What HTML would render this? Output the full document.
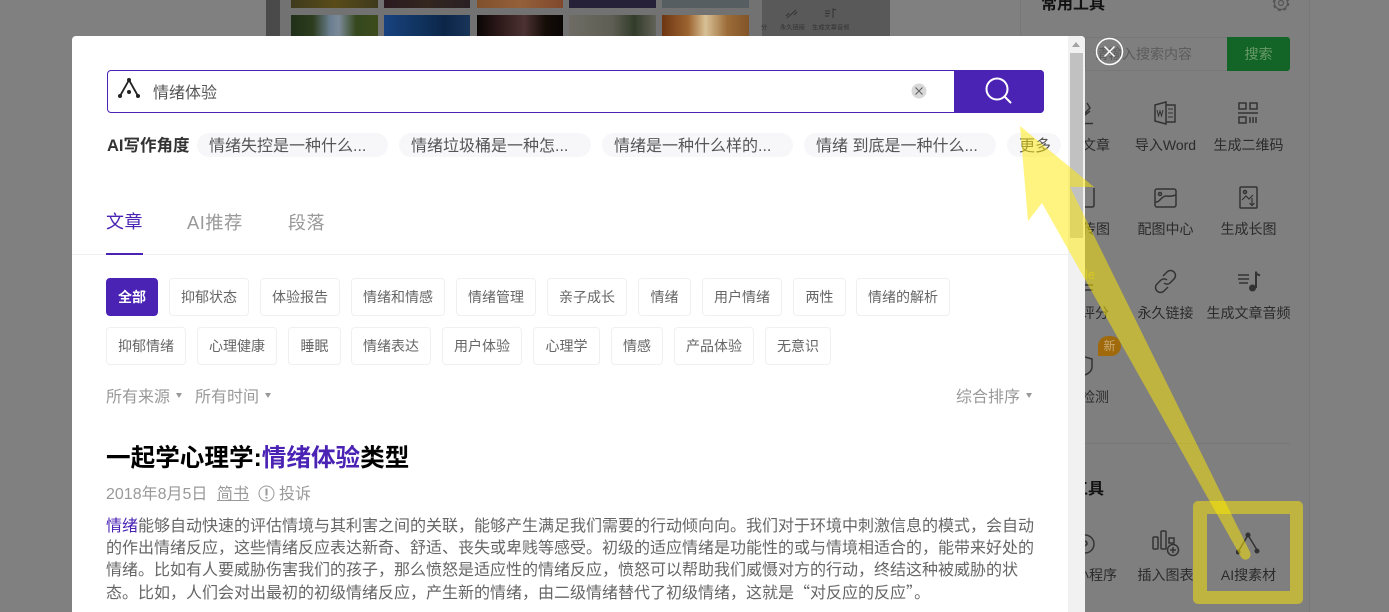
<!DOCTYPE html>
<html><head><meta charset="utf-8"><style>
*{box-sizing:border-box}
html,body{margin:0;padding:0;width:1389px;height:612px;overflow:hidden;background:#808080;font-family:"Liberation Sans","Noto Sans CJK SC",sans-serif}
#r{position:absolute;left:0;top:0;width:1389px;height:612px;overflow:hidden}
.a{position:absolute;white-space:nowrap}
.chip{position:absolute;height:38px;border:1px solid #f0f0f0;border-radius:4px;font-size:14px;line-height:36px;text-align:center;color:#666;background:#fff}
.pill{position:absolute;top:133px;height:24px;border-radius:12px;background:#f7f7fa;font-size:16px;line-height:27px;color:#555;padding-left:12px;white-space:nowrap}
.lab{position:absolute;font-size:14px;line-height:20px;color:#2b2b2b;text-align:center;white-space:nowrap;width:100px}
.im{position:absolute}
svg.i{position:absolute;fill:none;stroke:#333;stroke-width:1.5}
.q{font-family:"Noto Sans CJK SC",sans-serif;line-height:0}
</style></head><body><div id="r">
<!-- background page -->
<div class="a" style="left:266px;top:0;width:14px;height:36px;background:#4a4a4a"></div>
<div class="a" style="left:280px;top:0;width:482px;height:36px;background:#727272"></div>
<div class="im" style="left:291px;top:0;width:87px;height:8px;background:linear-gradient(90deg,#3e3a1c,#5a4c1a 50%,#3e3a1c)"></div>
<div class="im" style="left:384px;top:0;width:86px;height:8px;background:linear-gradient(90deg,#2a1a20,#33261f,#2a2024)"></div>
<div class="im" style="left:477px;top:0;width:86px;height:8px;background:linear-gradient(90deg,#80502c,#94603a,#80482c)"></div>
<div class="im" style="left:569px;top:0;width:87px;height:8px;background:#262038"></div>
<div class="im" style="left:662px;top:0;width:87px;height:8px;background:#565e62"></div>
<div class="im" style="left:291px;top:15px;width:87px;height:21px;background:linear-gradient(90deg,#20301a,#2c3c1c 25%,#6a7e90 45%,#7c8a98 55%,#34481e 75%,#3e4c1c)"></div>
<div class="im" style="left:384px;top:15px;width:86px;height:21px;background:linear-gradient(90deg,#184280,#103460 40%,#0c2648 70%,#183458)"></div>
<div class="im" style="left:477px;top:15px;width:86px;height:21px;background:linear-gradient(90deg,#0a0606,#2c1818 25%,#4c3232 55%,#140c06 80%,#0a0606)"></div>
<div class="im" style="left:569px;top:15px;width:87px;height:21px;background:linear-gradient(90deg,#6e6c64,#5e5e54 50%,#323c2a 75%,#626258)"></div>
<div class="im" style="left:662px;top:15px;width:87px;height:21px;background:linear-gradient(90deg,#6e3612,#9c6430 30%,#d8c096 50%,#9c6c38 75%,#825428)"></div>
<div class="a" style="left:762px;top:0;width:128px;height:36px;background:#595959"></div>
<svg class="a" style="left:785px;top:8px" width="14" height="12" viewBox="0 0 14 12" fill="none" stroke="#333" stroke-width="1"><path d="M2 10l9-8M1 8l3-3M9 7l3-3"/></svg>
<svg class="a" style="left:825px;top:8px" width="12" height="12" viewBox="0 0 12 12" fill="none" stroke="#333" stroke-width="1"><path d="M0 3h5M0 5.500h5M0 8h4M8 10V1l3 1"/></svg>
<div class="a" style="left:780px;top:24px;font-size:8px;color:#333;line-height:10px;transform:scale(.78);transform-origin:0 0">永久链接</div>
<div class="a" style="left:812px;top:24px;font-size:8px;color:#333;line-height:10px;transform:scale(.78);transform-origin:0 0">生成文章音频</div>
<div class="a" style="left:761px;top:24px;font-size:8px;color:#333;line-height:10px;transform:scale(.78);transform-origin:0 0">分</div>

<!-- sidebar -->
<div class="a" style="left:1020px;top:0;width:290px;height:612px;background:#7f7f7f;border:1px solid #787878;border-width:0 1px"></div>
<div class="a" style="left:1041px;top:-5px;font-size:16px;font-weight:bold;line-height:20px;color:#111">常用工具</div>
<svg class="i" style="left:1272px;top:-6px" width="18" height="18" viewBox="0 0 18 18"><circle stroke="#555" cx="9" cy="9" r="6.500" stroke-width="1.200"/><circle stroke="#555" cx="9" cy="9" r="7.500" stroke-width="1.500" stroke-dasharray="3 3"/><circle stroke="#555" cx="9" cy="9" r="2.500" stroke-width="1.200"/></svg>
<div class="a" style="left:1085px;top:37px;width:142px;height:34px;border:1px solid #777;border-right:0"></div>
<div class="a" style="left:1094px;top:44px;font-size:14px;line-height:20px;color:#5c5c5c">请输入搜索内容</div>
<div class="a" style="left:1227px;top:37px;width:63px;height:34px;background:#126526;border-radius:0 3px 3px 0;font-size:14px;line-height:34px;text-align:center;color:#6a9a6a">搜索</div>

<!-- icons -->
<svg class="i" style="left:1085px;top:101px" width="10" height="24" viewBox="0 0 10 24"><path d="M0 22.500h8M0 14l5-4M2 2l3 5-5 5"/></svg>
<svg class="i" style="left:1154px;top:101px" width="22" height="24" viewBox="0 0 22 24" stroke-width="1.300"><path d="M1 4l11-3v22L1 20z M12 4h9v17h-9"/><path d="M14 8h5M14 12h5M14 16h5M3 9l1.500 6 1.500-5 1.500 5L9 9" stroke-width="1"/></svg>
<svg class="i" style="left:1238px;top:102px" width="20" height="22" viewBox="0 0 20 22" stroke-width="1.500"><rect x="1" y="1" width="7" height="6"/><rect x="12" y="1" width="7" height="6"/><path d="M0 11h20M1 15h7v6H1zM12 15v6M15 15v6M18 15v6"/></svg>
<svg class="i" style="left:1085px;top:186px" width="10" height="22" viewBox="0 0 10 22"><path d="M0 21h7q2 0 2-2V2"/></svg>
<svg class="i" style="left:1154px;top:188px" width="23" height="20" viewBox="0 0 23 20" stroke-width="1.400"><rect x="1" y="1" width="21" height="18" rx="2"/><path d="M1 14c5 1 6-6 11-6 3 0 4 1 10-1"/><circle cx="6" cy="6" r="1.500"/></svg>
<svg class="i" style="left:1239px;top:186px" width="19" height="23" viewBox="0 0 19 23" stroke-width="1.400"><rect x="1" y="1" width="17" height="21" rx="1"/><circle cx="6" cy="6" r="1.500"/><path d="M3 14l4-4 3 3 4-4M13 12v7M10.500 17l2.500 2.500 2.500-2.500" stroke-width="1.200"/></svg>
<div class="a" style="left:1085px;top:268px;font-size:13px;color:#b0a94a;line-height:14px">le</div>
<svg class="i" style="left:1085px;top:284px" width="10" height="8" viewBox="0 0 10 8"><path d="M0 1h8M0 6h8"/></svg>
<svg class="i" style="left:1153px;top:269px" width="25" height="25" viewBox="0 0 25 25" stroke-width="1.500"><path d="M10 7l4-4a4.500 4.500 0 0 1 7 7l-4 4a4.500 4.500 0 0 1-6 0M15 18l-4 4a4.500 4.500 0 0 1-7-7l4-4a4.500 4.500 0 0 1 6 0"/></svg>
<svg class="i" style="left:1237px;top:270px" width="24" height="22" viewBox="0 0 24 22" stroke-width="1.500"><path d="M1 5h11M1 9h11M2 13h9"/><path d="M19 18V1.500c0 3 2 3 4 4" stroke-width="2"/><circle cx="15.500" cy="18" r="3.500" fill="#333" stroke="none"/></svg>
<svg class="i" style="left:1085px;top:356px" width="8" height="20" viewBox="0 0 8 20"><path d="M0 1l7 2v8q0 5-7 8"/></svg>
<div class="a" style="left:1098px;top:336px;width:23px;height:20px;background:#a06a0c;border-radius:10px 10px 10px 0;font-size:12px;line-height:20px;text-align:center;color:#c8aa70">新</div>
<svg class="i" style="left:1085px;top:532px" width="10" height="24" viewBox="0 0 10 24"><path d="M0 3a9 9 0 0 1 0 18"/><path d="M0 9a3 3 0 0 1 2 3l-2 2"/></svg>
<svg class="i" style="left:1151px;top:530px" width="29" height="27" viewBox="0 0 29 27" stroke-width="1.300"><rect x="2" y="7" width="5" height="12" rx="1"/><rect x="10" y="1" width="5" height="18" rx="1"/><rect x="18" y="8" width="5" height="5"/><circle cx="22" cy="20" r="5.500"/><path d="M19 20h6M22 17v6"/></svg>
<svg class="i" style="left:1236px;top:532px" width="24" height="24" viewBox="0 0 24 24" stroke-width="1.500"><path d="M2 20L12 3l9 15"/><circle cx="12" cy="3" r="1.800" fill="#333"/><circle cx="21" cy="19" r="1.800" fill="#333"/><circle cx="2" cy="20" r="1.800" fill="#333"/></svg>

<div class="lab" style="left:1060px;top:135px;width:50px;text-align:right">文章</div>
<div class="lab" style="left:1115.500px;top:135px">导入Word</div>
<div class="lab" style="left:1198.500px;top:135px">生成二维码</div>
<div class="lab" style="left:1060px;top:219px;width:50px;text-align:right">传图</div>
<div class="lab" style="left:1115.500px;top:219px">配图中心</div>
<div class="lab" style="left:1198.500px;top:219px">生成长图</div>
<div class="lab" style="left:1059px;top:303px;width:50px;text-align:right">评分</div>
<div class="lab" style="left:1115.500px;top:303px">永久链接</div>
<div class="lab" style="left:1198.500px;top:303px">生成文章音频</div>
<div class="lab" style="left:1059px;top:387px;width:50px;text-align:right">检测</div>
<div class="a" style="left:1085px;top:443px;width:205px;height:1px;background:#777"></div>
<div class="a" style="left:1072px;top:480px;font-size:16px;font-weight:bold;line-height:20px;color:#111;width:32px;text-align:right">工具</div>
<div class="lab" style="left:1067px;top:565px;width:50px;text-align:right">小程序</div>
<div class="lab" style="left:1115.500px;top:565px">插入图表</div>
<div class="lab" style="left:1198.500px;top:565px">AI搜素材</div>

<!-- modal -->
<div class="a" style="left:72px;top:36px;width:1013px;height:576px;background:#fff;border-radius:4px 4px 0 0;overflow:hidden">
 <div class="a" style="left:996px;top:0;width:17px;height:576px;background:#f1f1f1"></div>
 <div class="a" style="left:998px;top:17px;width:13px;height:185px;background:#c1c1c1"></div>
 <div class="a" style="left:1000px;top:6px;width:0;height:0;border:4px solid transparent;border-top:0;border-bottom:5px solid #a3a3a3"></div>
</div>
<div class="a" style="left:107px;top:70px;width:937px;height:43px;border:1px solid #4a23b5;border-radius:4px"></div>
<div class="a" style="left:954px;top:70px;width:90px;height:43px;background:#4a23b5;border-radius:0 4px 4px 0"></div>
<svg class="a" style="left:981px;top:74px" width="32" height="30" viewBox="0 0 32 30" fill="none" stroke="#fff" stroke-width="2"><circle cx="16" cy="15" r="10.500"/><path d="M23.500 22.500l6 6" stroke-linecap="round"/></svg>
<svg class="a" style="left:116px;top:77px" width="26" height="22" viewBox="0 0 26 22" fill="none" stroke="#222" stroke-width="1.800"><path d="M4 19L13 3l9 16"/><circle cx="13" cy="3" r="2" fill="#222" stroke="none"/><circle cx="13" cy="15" r="2" fill="#222" stroke="none"/><circle cx="4" cy="19" r="2" fill="#222" stroke="none"/><circle cx="22" cy="19" r="2" fill="#222" stroke="none"/></svg>
<div class="a" style="left:153px;top:83px;font-size:16px;line-height:22px;color:#555">情绪体验</div>
<svg class="a" style="left:911px;top:83px" width="16" height="16" viewBox="0 0 16 16"><circle cx="8" cy="8" r="7.500" fill="#d8d8d8"/><path d="M4.500 4.500l7 7M11.500 4.500l-7 7" stroke="#666" stroke-width="1.200"/></svg>
<div class="a" style="left:107px;top:135px;font-size:16.500px;font-weight:bold;line-height:22px;color:#333">AI写作角度</div>
<div class="pill" style="left:197px;width:191px">情绪失控是一种什么...</div>
<div class="pill" style="left:399px;width:192px">情绪垃圾桶是一种怎...</div>
<div class="pill" style="left:602px;width:191px">情绪是一种什么样的...</div>
<div class="pill" style="left:804px;width:192px">情绪 到底是一种什么...</div>
<div class="pill" style="left:1007px;width:54px">更多</div>

<div class="a" style="left:106px;top:209px;font-size:18px;line-height:26px;color:#4a23b5;letter-spacing:.5px">文章</div>
<div class="a" style="left:187px;top:210px;font-size:18.300px;line-height:26px;color:#999;letter-spacing:.5px">AI推荐</div>
<div class="a" style="left:288px;top:210px;font-size:18px;line-height:26px;color:#999;letter-spacing:.5px">段落</div>
<div class="a" style="left:72px;top:254px;width:996px;height:1px;background:#f0f0f0"></div>
<div class="a" style="left:106px;top:253px;width:37px;height:2px;background:#4a23b5"></div>

<div class="chip" style="left:106px;top:278px;width:52px;background:#4a23b5;color:#fff;border-color:#4a23b5;font-weight:bold">全部</div>
<div class="chip" style="left:169px;top:278px;width:80px">抑郁状态</div>
<div class="chip" style="left:260px;top:278px;width:80px">体验报告</div>
<div class="chip" style="left:351px;top:278px;width:94px">情绪和情感</div>
<div class="chip" style="left:456px;top:278px;width:80px">情绪管理</div>
<div class="chip" style="left:547px;top:278px;width:80px">亲子成长</div>
<div class="chip" style="left:638px;top:278px;width:53px">情绪</div>
<div class="chip" style="left:702px;top:278px;width:80px">用户情绪</div>
<div class="chip" style="left:793px;top:278px;width:53px">两性</div>
<div class="chip" style="left:856px;top:278px;width:94px">情绪的解析</div>
<div class="chip" style="left:106px;top:327px;width:80px">抑郁情绪</div>
<div class="chip" style="left:197px;top:327px;width:80px">心理健康</div>
<div class="chip" style="left:288px;top:327px;width:53px">睡眠</div>
<div class="chip" style="left:351px;top:327px;width:80px">情绪表达</div>
<div class="chip" style="left:442px;top:327px;width:80px">用户体验</div>
<div class="chip" style="left:533px;top:327px;width:67px">心理学</div>
<div class="chip" style="left:611px;top:327px;width:52px">情感</div>
<div class="chip" style="left:674px;top:327px;width:80px">产品体验</div>
<div class="chip" style="left:765px;top:327px;width:66px">无意识</div>

<div class="a" style="left:106px;top:387px;font-size:16px;line-height:22px;color:#999">所有来源</div>
<div class="a" style="left:176px;top:393px;border:3.500px solid transparent;border-top:5px solid #999;border-bottom:0"></div>
<div class="a" style="left:195px;top:387px;font-size:16px;line-height:22px;color:#999">所有时间</div>
<div class="a" style="left:265px;top:393px;border:3.500px solid transparent;border-top:5px solid #999;border-bottom:0"></div>
<div class="a" style="left:956px;top:387px;font-size:16px;line-height:22px;color:#999">综合排序</div>
<div class="a" style="left:1026px;top:393px;border:3.500px solid transparent;border-top:5px solid #999;border-bottom:0"></div>

<div class="a" style="left:106px;top:443px;font-size:24.600px;font-weight:bold;line-height:32px;color:#000">一起学心理学:<span style="color:#4a23b5">情绪体验</span>类型</div>
<div class="a" style="left:106px;top:484px;font-size:16px;line-height:22px;color:#999">2018年8月5日</div>
<div class="a" style="left:217px;top:484px;font-size:16px;line-height:22px;color:#999;text-decoration:underline">简书</div>
<svg class="a" style="left:258px;top:485px" width="17" height="17" viewBox="0 0 17 17" fill="none" stroke="#999" stroke-width="1"><circle cx="8.500" cy="8.500" r="7.500"/><path d="M8.500 3.500v7M8.500 12v1.500" stroke-width="2"/></svg>
<div class="a" style="left:279px;top:484px;font-size:16px;line-height:22px;color:#999">投诉</div>
<div class="a" style="left:106px;top:516px;font-size:16px;line-height:22.200px;color:#666"><span style="color:#4a23b5">情绪</span>能够自动快速的评估情境与其利害之间的关联，能够产生满足我们需要的行动倾向向。我们对于环境中刺激信息的模式，会自动<br>的作出情绪反应，这些情绪反应表达新奇、舒适、丧失或卑贱等感受。初级的适应情绪是功能性的或与情境相适合的，能带来好处的<br>情绪。比如有人要威胁伤害我们的孩子，那么愤怒是适应性的情绪反应，愤怒可以帮助我们威慑对方的行动，终结这种被威胁的状<br>态。比如，人们会对出最初的初级情绪反应，产生新的情绪，由二级情绪替代了初级情绪，这就是<span class="q">“</span>对反应的反应<span class="q">”</span>。</div>

<!-- close -->
<svg class="a" style="left:1095px;top:37px" width="29" height="29" viewBox="0 0 29 29" fill="none" stroke="#fff"><circle cx="14.500" cy="14.500" r="13" stroke-width="1.500"/><path d="M9.500 9.500l10 10M19.500 9.500l-10 10" stroke-width="1.500"/></svg>

<!-- annotation -->
<svg class="a" style="left:0;top:0" width="1389" height="612" viewBox="0 0 1389 612">
 <path fill="#ffe900" fill-opacity=".5" d="M1020 126L1094 187H1070L1250 552a4.500 4.500 0 0 1-9 5L1042 203L1028 221Z"/>
 <path fill="#ffe900" fill-opacity=".5" fill-rule="evenodd" d="M1198 501H1298a5 5 0 0 1 5 5V599a5 5 0 0 1-5 5H1198a5 5 0 0 1-5-5V506a5 5 0 0 1 5-5ZM1207 514V591H1290V514Z"/>
</svg>
</div></body></html>
